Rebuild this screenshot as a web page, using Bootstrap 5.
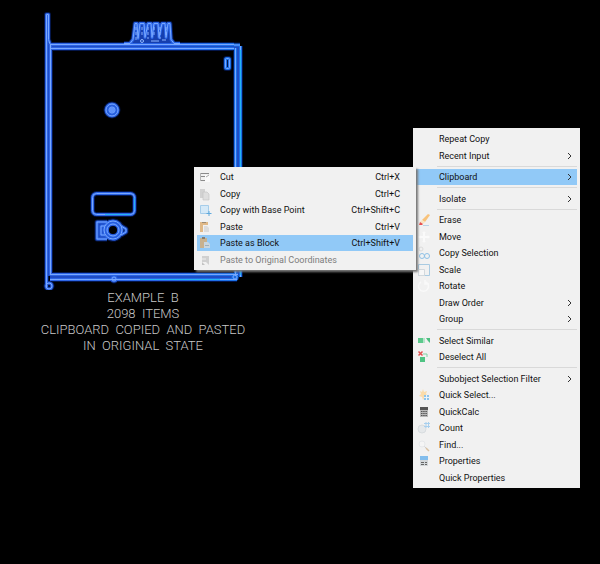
<!DOCTYPE html>
<html lang="en">
<head>
<meta charset="utf-8">
<meta name="viewport" content="width=device-width, initial-scale=1">
<title>Drawing – clipboard menu</title>
<link rel="stylesheet" href="https://cdn.jsdelivr.net/npm/bootstrap@5.3.0/dist/css/bootstrap.min.css">
<style>
  body { background: #000; font-family: Roboto, "Open Sans", sans-serif; }
  .workspace { min-height: 100vh; }
  .cad-figure { width: 226px; margin-left: 30px; }
  .cad-label { font-size: 13px; line-height: 16px; font-weight: 300; color: #c8c8c8; }
  .ctx-menu { background: #f1f1f1; padding: 3px 3px 2px; font-size: 9px; line-height: 16px; }
  .ctx-main { left: 413px; top: 128px; width: 167px; }
  .ctx-sub { left: 194px; top: 167px; width: 222px; box-shadow: 2px 2px 2px #777; z-index: 2; padding-top: 2px; }
  .ctx-item { background: none; color: #111; height: 16px; padding: 0 5px 0 1px; }
  .ctx-item:nth-of-type(even) { height: 17px; }
  .ctx-sub .ctx-item { padding-right: 13px; }
  .ctx-item.current { background: #91c9f7; }
  .ctx-item:disabled { color: #7d7d7d; }
  .ctx-icon { width: 22px; height: 14px; }
  .ctx-icon svg, .chev, .cad-figure svg { display: block; }
  .ctx-rule { height: 1px; margin: 2px 0 2px 21px; background: #d9d9d9; opacity: 1; }
</style>
</head>
<body>
<main class="workspace position-relative overflow-hidden">
  <figure class="cad-figure mb-0">
    <svg width="226" height="290" viewBox="0 0 226 290" fill="none" role="img" aria-label="Enclosure drawing">
      <defs>
        <g id="outline">
          <path d="M16.500 287V14.500h2v25l1.500 4.500M20.500 44v231M20 44.500h184M21 48.500h183M205.500 48v228M210.500 46v231M204 45h6M20 274.500h188M20 279.500h187"/>
          <path d="M94 43.500h6l3-4 2-16h2l1 15 2-15h4l1 14 3-14h3l1 14 2-14h4l1 14 3-14h3l1 14 2-14h2l1 16 3 4h6"/>
          <circle cx="82" cy="110" r="6"/><circle cx="82" cy="110" r="3"/>
          <rect x="195.500" y="58.500" width="4" height="10" rx="1"/>
          <rect x="62.500" y="193.500" width="42" height="21" rx="4"/>
          <path d="M77 222h-10v17h10M75 226h-4v9h4"/>
          <circle cx="83" cy="230" r="9"/><circle cx="83" cy="230" r="6"/>
          <path d="M91 226l5 3v3l-5 3"/>
          <circle cx="19" cy="286" r="3"/><circle cx="84" cy="279" r="2"/><circle cx="205" cy="277" r="2"/>
        </g>
        <linearGradient id="edge" gradientUnits="userSpaceOnUse" x1="0" y1="0" x2="226" y2="0">
          <stop offset="0" stop-color="#2f65e4"/><stop offset=".6" stop-color="#2863e6"/><stop offset="1" stop-color="#1675e8"/>
        </linearGradient>
      </defs>
      <use href="#outline" stroke="#06206a" stroke-width="5" stroke-linejoin="round" opacity=".7"/>
      <path d="M15 44h7v232h-7zM21 44h189v5H21zM205 46h6v230h-6zM20 274h188v6H20z" fill="#1f4cc4"/>
      <path d="M96 45l8-6 1-16h34l1 16 8 6z" fill="#163fae"/>
      <path d="M66 221h11l6-1 10 8v5l-8 8-8-2H66z" fill="#1b46b8"/>
      <circle cx="82" cy="110" r="6" fill="#1b46b8"/>
      <use href="#outline" stroke="url(#edge)" stroke-width="3" stroke-linejoin="round"/>
      <circle cx="83" cy="230" r="4" fill="#000"/>
      <use href="#outline" stroke="#78a8ff" stroke-width="1"/>
      <path d="M210.500 50v225M110 279.500h80M75 214.500h25M104.500 198v12" stroke="#27b4f0"/>
      <path d="M106 27v13M112 27v10M118 27v12M124 27v10M130 27v12M136 27v10" stroke="#86b0ff" stroke-dasharray="3 2"/>
      <circle cx="112" cy="41" r="1.500" stroke="#8db5ff"/>
      <path d="M121 41h8M132 40h4" stroke="#8db5ff"/>
      <circle cx="82" cy="110" r="3" fill="#5e92fa"/>
    </svg>
    <figcaption class="cad-label text-center text-nowrap">EXAMPLE &nbsp;B<br>2098 &nbsp;ITEMS<br>CLIPBOARD &nbsp;COPIED &nbsp;AND &nbsp;PASTED<br>IN &nbsp;ORIGINAL &nbsp;STATE</figcaption>
  </figure>

  <div class="ctx-menu ctx-main position-absolute d-flex flex-column" role="menu" aria-label="Shortcut menu">
    <button type="button" role="menuitem" class="ctx-item border-0 d-flex align-items-center text-nowrap"><span class="ctx-icon"></span>Repeat Copy</button>
    <button type="button" role="menuitem" class="ctx-item border-0 d-flex align-items-center text-nowrap"><span class="ctx-icon"></span>Recent Input<svg class="chev ms-auto" width="5" height="8" viewBox="0 0 5 8" fill="none" stroke="#333"><path d="M1 1l3 3-3 3"/></svg></button>
    <hr class="ctx-rule border-0">
    <button type="button" role="menuitem" class="ctx-item current border-0 d-flex align-items-center text-nowrap"><span class="ctx-icon"></span>Clipboard<svg class="chev ms-auto" width="5" height="8" viewBox="0 0 5 8" fill="none" stroke="#333"><path d="M1 1l3 3-3 3"/></svg></button>
    <hr class="ctx-rule border-0">
    <button type="button" role="menuitem" class="ctx-item border-0 d-flex align-items-center text-nowrap"><span class="ctx-icon"></span>Isolate<svg class="chev ms-auto" width="5" height="8" viewBox="0 0 5 8" fill="none" stroke="#333"><path d="M1 1l3 3-3 3"/></svg></button>
    <hr class="ctx-rule border-0">
    <button type="button" role="menuitem" class="ctx-item border-0 d-flex align-items-center text-nowrap"><span class="ctx-icon"><svg width="14" height="14" viewBox="0 0 14 14"><path d="M11 1l2 1-5 7-3-2z" fill="#f8c27a"/><path d="M5 7l3 2-2 2-3-2z" fill="#fae3c0"/><path d="M3 9l3 2-1 1H2z" fill="#e8504f"/><path d="M6 12.500h6" stroke="#b9d3e6"/></svg></span>Erase</button>
    <button type="button" role="menuitem" class="ctx-item border-0 d-flex align-items-center text-nowrap"><span class="ctx-icon"><svg width="14" height="14" viewBox="0 0 14 14" stroke="#fafafa" fill="none"><path d="M7 2v10M2 7h10" stroke-width="2"/><path d="M5.500 3L7 1.500 8.500 3M5.500 11L7 12.500 8.500 11M3 5.500L1.500 7 3 8.500M11 5.500L12.500 7 11 8.500"/></svg></span>Move</button>
    <button type="button" role="menuitem" class="ctx-item border-0 d-flex align-items-center text-nowrap"><span class="ctx-icon"><svg width="14" height="14" viewBox="0 0 14 14" fill="none"><circle cx="4" cy="3" r="2" stroke="#dcdcdc"/><circle cx="5" cy="10" r="2.500" stroke="#8fc1e6"/><circle cx="10" cy="10" r="2.500" stroke="#8fc1e6"/></svg></span>Copy Selection</button>
    <button type="button" role="menuitem" class="ctx-item border-0 d-flex align-items-center text-nowrap"><span class="ctx-icon"><svg width="14" height="14" viewBox="0 0 14 14" fill="none"><path d="M1.500 1.500h11v11h-11z" stroke="#a9cbe2"/><path d="M1.500 6.500h6v6h-6z" fill="#f7f7f7" stroke="#d3d9dd"/></svg></span>Scale</button>
    <button type="button" role="menuitem" class="ctx-item border-0 d-flex align-items-center text-nowrap"><span class="ctx-icon"><svg width="14" height="14" viewBox="0 0 14 14" fill="none" stroke="#f9f9f9" stroke-width="1.500"><path d="M9 3a5 5 0 1 1-5 0M8 1v4h4"/></svg></span>Rotate</button>
    <button type="button" role="menuitem" class="ctx-item border-0 d-flex align-items-center text-nowrap"><span class="ctx-icon"></span>Draw Order<svg class="chev ms-auto" width="5" height="8" viewBox="0 0 5 8" fill="none" stroke="#333"><path d="M1 1l3 3-3 3"/></svg></button>
    <button type="button" role="menuitem" class="ctx-item border-0 d-flex align-items-center text-nowrap"><span class="ctx-icon"></span>Group<svg class="chev ms-auto" width="5" height="8" viewBox="0 0 5 8" fill="none" stroke="#333"><path d="M1 1l3 3-3 3"/></svg></button>
    <hr class="ctx-rule border-0">
    <button type="button" role="menuitem" class="ctx-item border-0 d-flex align-items-center text-nowrap"><span class="ctx-icon"><svg width="14" height="14" viewBox="0 0 14 14"><path d="M1 4h5v5H1z" fill="#5cc98c"/><path d="M6 4h2v5H6z" fill="#b5e4ca"/><path d="M9 4h4v5l-2-2z" fill="#4cbf80"/></svg></span>Select Similar</button>
    <button type="button" role="menuitem" class="ctx-item border-0 d-flex align-items-center text-nowrap"><span class="ctx-icon"><svg width="14" height="14" viewBox="0 0 14 14"><path d="M1.500 1.500l4 4m0-4l-4 4" stroke="#e2504f" stroke-width="1.500"/><path d="M3 7h5v5H3z" fill="#4fc383"/><path d="M6 4h4v3" fill="none" stroke="#7fd3a5"/></svg></span>Deselect All</button>
    <hr class="ctx-rule border-0">
    <button type="button" role="menuitem" class="ctx-item border-0 d-flex align-items-center text-nowrap"><span class="ctx-icon"></span>Subobject Selection Filter<svg class="chev ms-auto" width="5" height="8" viewBox="0 0 5 8" fill="none" stroke="#333"><path d="M1 1l3 3-3 3"/></svg></button>
    <button type="button" role="menuitem" class="ctx-item border-0 d-flex align-items-center text-nowrap"><span class="ctx-icon"><svg width="14" height="14" viewBox="0 0 14 14"><path d="M6 1l1 3 3-1-1 3 2 2-3 1-2 3-1-3-3-1 2-2-1-3 2 1z" fill="#fbdcaa"/><path d="M7 7h5v5H7z" fill="#8fc4ea"/><path d="M7 9.500h5M9.500 7v5" stroke="#eaf4fb"/></svg></span>Quick Select...</button>
    <button type="button" role="menuitem" class="ctx-item border-0 d-flex align-items-center text-nowrap"><span class="ctx-icon"><svg width="14" height="14" viewBox="0 0 14 14"><path d="M3 2h8v10H3z" fill="#b9b9b9"/><path d="M3 2h8v3H3z" fill="#555"/><path d="M4 6.500h6M4 8.500h6M4 10.500h6" stroke="#555" stroke-dasharray="1.500 .7"/></svg></span>QuickCalc</button>
    <button type="button" role="menuitem" class="ctx-item border-0 d-flex align-items-center text-nowrap"><span class="ctx-icon"><svg width="14" height="14" viewBox="0 0 14 14" fill="none"><circle cx="5" cy="8" r="4" fill="#e5e8ea" stroke="#d8dcdf"/><path d="M9 1v6M11.500 1v6M7 2.500h6M7 5.500h6" stroke="#a7cfee"/></svg></span>Count</button>
    <button type="button" role="menuitem" class="ctx-item border-0 d-flex align-items-center text-nowrap"><span class="ctx-icon"><svg width="14" height="14" viewBox="0 0 14 14" fill="none"><circle cx="5" cy="6" r="3" fill="#f5f5f5" stroke="#e6e8ea"/><path d="M7.500 8.500l2 2" stroke="#ccc"/><path d="M9 10l3 3" stroke="#d9c1a2" stroke-width="1.500"/></svg></span>Find...</button>
    <button type="button" role="menuitem" class="ctx-item border-0 d-flex align-items-center text-nowrap"><span class="ctx-icon"><svg width="14" height="14" viewBox="0 0 14 14"><path d="M3 2h8v10H3z" fill="#d3d7da"/><path d="M3 2h8v4H3z" fill="#82bdec"/><path d="M4 8.500h6M4 10.500h6" stroke="#666" stroke-dasharray="3 1"/></svg></span>Properties</button>
    <button type="button" role="menuitem" class="ctx-item border-0 d-flex align-items-center text-nowrap"><span class="ctx-icon"></span>Quick Properties</button>
  </div>

  <div class="ctx-menu ctx-sub position-absolute d-flex flex-column" role="menu" aria-label="Clipboard">
    <button type="button" role="menuitem" class="ctx-item border-0 d-flex align-items-center text-nowrap"><span class="ctx-icon"><svg width="14" height="14" viewBox="0 0 14 14" fill="none"><path d="M7 5h5v7H7z" fill="#fafafa"/><path d="M2 3.500h9M2 6.500h5M2 10.500h5" stroke="#8b8b8b"/><path d="M2.500 3v8" stroke="#b5b5b5"/><path d="M8 7l3-2" stroke="#aaa"/></svg></span>Cut<span class="ms-auto">Ctrl+X</span></button>
    <button type="button" role="menuitem" class="ctx-item border-0 d-flex align-items-center text-nowrap"><span class="ctx-icon"><svg width="14" height="14" viewBox="0 0 14 14"><path d="M2 2h5v9H2z" fill="#d2d2d2"/><path d="M5 5h4l2 2v6H5z" fill="#dedede" stroke="#c6c6c6" stroke-width=".7"/></svg></span>Copy<span class="ms-auto">Ctrl+C</span></button>
    <button type="button" role="menuitem" class="ctx-item border-0 d-flex align-items-center text-nowrap"><span class="ctx-icon"><svg width="14" height="14" viewBox="0 0 14 14"><path d="M2.500 2.500h8v8h-8z" fill="#d5e9f7" stroke="#a6cdea"/><path d="M11 8v5M8.500 10.500h5" stroke="#5fa9dd"/></svg></span>Copy with Base Point<span class="ms-auto">Ctrl+Shift+C</span></button>
    <button type="button" role="menuitem" class="ctx-item border-0 d-flex align-items-center text-nowrap"><span class="ctx-icon"><svg width="14" height="14" viewBox="0 0 14 14"><path d="M2 2h8v3H5v7H2z" fill="#e0b988"/><path d="M4 2h4v1H4z" fill="#9b8a74"/><path d="M6 6h3l2 2v4H6z" fill="#dcdcdc"/></svg></span>Paste<span class="ms-auto">Ctrl+V</span></button>
    <button type="button" role="menuitem" class="ctx-item current border-0 d-flex align-items-center text-nowrap"><span class="ctx-icon"><svg width="14" height="14" viewBox="0 0 14 14"><path d="M2 2h7v10H2z" fill="#c8b18e"/><path d="M4 1h3v2H4z" fill="#857d70"/><path d="M6 6h4l2 2v4H6z" fill="#c8d6e0"/><path d="M7 9.500h4" stroke="#9dafbb"/></svg></span>Paste as Block<span class="ms-auto">Ctrl+Shift+V</span></button>
    <button type="button" role="menuitem" disabled class="ctx-item border-0 d-flex align-items-center text-nowrap"><span class="ctx-icon"><svg width="14" height="14" viewBox="0 0 14 14"><path d="M4 3h7v9L8 9H4z" fill="#d0d0d0"/><path d="M4 6h4" stroke="#eee"/><path d="M4 9l3 3H4z" fill="#c3c3c3"/></svg></span>Paste to Original Coordinates</button>
  </div>
</main>
<script src="https://cdn.jsdelivr.net/npm/bootstrap@5.3.0/dist/js/bootstrap.bundle.min.js"></script>
</body>
</html>
